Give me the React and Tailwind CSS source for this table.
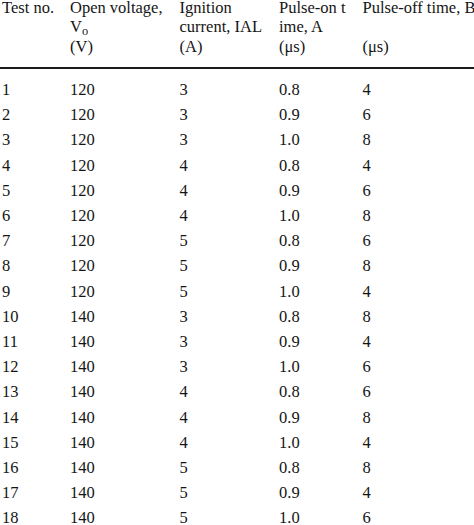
import React from 'react';

const rows = [
  [1, 120, 3, '0.8', 4],
  [2, 120, 3, '0.9', 6],
  [3, 120, 3, '1.0', 8],
  [4, 120, 4, '0.8', 4],
  [5, 120, 4, '0.9', 6],
  [6, 120, 4, '1.0', 8],
  [7, 120, 5, '0.8', 6],
  [8, 120, 5, '0.9', 8],
  [9, 120, 5, '1.0', 4],
  [10, 140, 3, '0.8', 8],
  [11, 140, 3, '0.9', 4],
  [12, 140, 3, '1.0', 6],
  [13, 140, 4, '0.8', 6],
  [14, 140, 4, '0.9', 8],
  [15, 140, 4, '1.0', 4],
  [16, 140, 5, '0.8', 8],
  [17, 140, 5, '0.9', 4],
  [18, 140, 5, '1.0', 6],
];

const cols = 'grid grid-cols-[68px_109.5px_99.5px_83.5px_1fr] pl-[2px]';

const App = () => {
  return (
    <div
      className="w-[474px] h-[525px] overflow-hidden bg-white text-[#151515] text-[16.5px]"
      style={{ fontFamily: '"Liberation Serif", "Times New Roman", serif' }}
    >
      {/* header */}
      <div className={`${cols} mt-[-2px] leading-[19.3px]`}>
        <div>Test no.</div>
        <div>
          Open voltage,<br />
          V<sub>o</sub><br />
          (V)
        </div>
        <div>
          Ignition<br />
          current, IAL<br />
          (A)
        </div>
        <div className="whitespace-nowrap">
          Pulse-on t<br />
          ime, A<br />
          (μs)
        </div>
        <div className="whitespace-nowrap">
          Pulse-off time, B<br />
          &nbsp;<br />
          (μs)
        </div>
      </div>

      <div className="mt-[11px] h-[2px] bg-[#1a1a1a]" />

      {/* body */}
      <div className="mt-[8px] leading-[25.2px]">
        {rows.map((r, i) => (
          <div key={i} className={cols}>
            {r.map((cell, j) => (
              <div key={j}>{cell}</div>
            ))}
          </div>
        ))}
      </div>
    </div>
  );
};

export default App;
